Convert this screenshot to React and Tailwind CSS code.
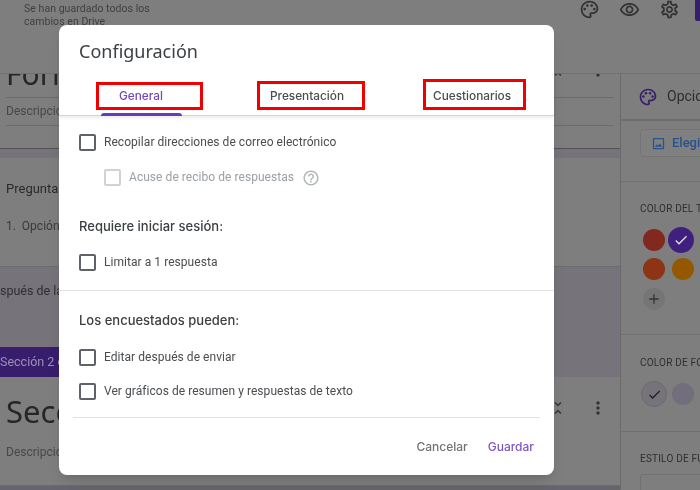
import { MdOutlinePalette, MdOutlineRemoveRedEye, MdOutlineSettings, MdCheck, MdOutlineImage, MdAdd, MdMoreVert, MdUnfoldLess, MdHelpOutline } from 'react-icons/md'

const Checkbox = ({ label, disabled = false, className = '' }) => (
  <div className={`flex items-center ${className}`}>
    <div className={`w-[17px] h-[17px] shrink-0 rounded-[2px] border-2 ${disabled ? 'border-[#d0d2d5]' : 'border-[#5f6368]'}`} />
    <span className={`ml-[8px] text-[12px] tracking-[0.05px] leading-none ${disabled ? 'text-[#9aa0a6]' : 'text-[#4a4d50]'}`}>{label}</span>
  </div>
)

const SettingsDialog = () => (
  <div className="absolute left-[59px] top-[25px] w-[495px] h-[450px] bg-white rounded-[8px] shadow-lg flex flex-col font-['Roboto',sans-serif]">
    <h2 className="pl-[20px] pt-[14px] h-[52px] text-[18px] leading-[24px] text-[#3c4043] font-['Noto_Sans',sans-serif]">Configuración</h2>

    <div className="relative h-[39px] shrink-0 flex items-start pl-[37px] border-b border-[#d5d5d5] shadow-[0_2px_3px_rgba(0,0,0,0.08)] font-['Inter',sans-serif] text-[11.8px] leading-[16px] font-medium">
      <div className="w-[107px] h-[28px] mt-[5px] pl-[20px] pb-[3px] border-[3px] border-[#f00000] flex items-end text-[#7248b9]">General</div>
      <div className="w-[108px] h-[29px] mt-[4px] ml-[54px] pl-[10px] pb-[3px] border-[3px] border-[#f00000] flex items-end text-[#4a4d50]">Presentación</div>
      <div className="w-[103px] h-[31px] mt-[2px] ml-[58px] pl-[7px] pb-[3px] border-[3px] border-[#f00000] flex items-end text-[#4a4d50]">Cuestionarios</div>
      <div className="absolute left-[42px] bottom-[-1px] w-[81px] h-[3px] rounded-t-[3px] bg-[#673ab7]" />
    </div>

    <div className="px-[20px] pt-[18px]">
      <Checkbox label="Recopilar direcciones de correo electrónico" className="h-[16px]" />
      <Checkbox label="Acuse de recibo de respuestas" disabled className="h-[16px] mt-[19px] ml-[25px]" />
      <div className="absolute left-[243px] top-[144px] text-[#b4b7ba]"><MdHelpOutline size={18} /></div>
      <h3 className="mt-[32px] h-[18px] text-[13px] leading-[18px] text-[#3c4043] font-medium font-['Inter',sans-serif]">Requiere iniciar sesión:</h3>
      <Checkbox label="Limitar a 1 respuesta" className="h-[16px] mt-[19px]" />
    </div>

    <div className="h-px bg-[#e2e2e2] mt-[20px]" />

    <div className="px-[20px] pt-[20px]">
      <h3 className="h-[18px] text-[13px] leading-[18px] text-[#3c4043] font-medium font-['Inter',sans-serif]">Los encuestados pueden:</h3>
      <Checkbox label="Editar después de enviar" className="h-[16px] mt-[20px]" />
      <Checkbox label="Ver gráficos de resumen y respuestas de texto" className="h-[16px] mt-[18px]" />
    </div>

    <div className="h-px bg-[#e2e2e2] mx-[14px] mt-[18px]" />

    <div className="flex justify-end pr-[20px] pt-[21px] text-[12px] leading-[16px] font-medium font-['Inter',sans-serif]">
      <button className="text-[#6f7276]">Cancelar</button>
      <button className="ml-[20px] text-[#7e57c2]">Guardar</button>
    </div>
  </div>
)

const Swatch = ({ color, check = false, size = 'w-[22px] h-[22px]' }) => (
  <div className={`${size} rounded-full flex items-center justify-center ${color}`}>
    {check && <MdCheck size={16} className="text-[#dcdcdc]" />}
  </div>
)

const App = () => (
  <div className="relative w-[700px] h-[490px] overflow-hidden bg-[#7e7e7e] font-['Roboto',sans-serif] blur-[0.4px]">
    <header className="h-[73px] flex items-start">
      <p className="ml-[24px] mt-[2px] text-[10.5px] leading-[13px] tracking-[0.05px] text-[#3f3f3f]">Se han guardado todos los<br />cambios en Drive</p>
      <div className="ml-auto flex items-center gap-[19px] mt-[-3px] text-[#333333]">
        <MdOutlinePalette size={21} />
        <MdOutlineRemoveRedEye size={21} />
        <MdOutlineSettings size={21} />
        <div className="w-[5px] h-[24px] ml-[-4px] bg-[#381d6c] rounded-l-[2px]" />
      </div>
    </header>

    <div className="flex h-[417px] border-t border-[#707070]">
      <main className="w-[620px] flex flex-col shrink-0">
        <section className="relative h-[74px] px-[6px] flex flex-col overflow-hidden">
          <div className="h-[24px] border-b border-[#6b6b6b] overflow-hidden">
            <p className="mt-[-18px] text-[30px] leading-[36px] text-[#262626] font-['Noto_Sans',sans-serif]">Form</p>
          </div>
          <div className="h-[28px] border-b border-[#6b6b6b] text-[12px] leading-[27px] text-[#484848]">Descripción</div>
          <div className="absolute right-[12px] top-[-14px] flex items-center gap-[21px] text-[#333333]">
            <MdUnfoldLess size={18} />
            <MdMoreVert size={20} />
          </div>
        </section>
        <div className="h-[10px] bg-[#76737b] border-t border-[#525252] shrink-0" />
        <section className="h-[109px] px-[6px] pt-[22px] border-b border-[#6c6c6c] shrink-0">
          <p className="text-[13px] leading-[18px] text-[#2a2a2a]">Pregunta</p>
          <p className="mt-[19px] text-[12px] leading-[18px] text-[#3a3a3a]">1.&nbsp;&nbsp;Opción</p>
        </section>
        <section className="h-[110px] bg-[#76737b] flex flex-col shrink-0">
          <p className="h-[80px] pt-[15px] text-[12.5px] leading-[18px] text-[#2e2e2e]">spués de la</p>
          <div className="h-[30px] w-[200px] bg-[#381d6c] text-[12.5px] leading-[30px] text-[#9c90b5]">Sección 2 de 2</div>
        </section>
        <section className="relative h-[108px] px-[6px] pt-[14px] shrink-0">
          <p className="text-[31px] leading-[40px] text-[#262626] font-['Noto_Sans',sans-serif]">Secc</p>
          <p className="mt-[12px] text-[12px] leading-[18px] text-[#484848]">Descripción</p>
          <div className="absolute right-[12px] top-[21px] flex items-center gap-[21px] text-[#333333]">
            <MdUnfoldLess size={18} />
            <MdMoreVert size={20} />
          </div>
        </section>
        <div className="flex-1 bg-[#66646c] border-t border-[#6c6c6c]" />
      </main>

      <aside className="flex-1 border-l border-[#6b6b6b] text-[#2e2e2e]">
        <div className="h-[47px] pl-[17px] flex items-center border-b-2 border-[#6d6d6d]">
          <MdOutlinePalette size={20} className="text-[#381d6c]" />
          <span className="ml-[9px] text-[14px] whitespace-nowrap">Opciones</span>
        </div>
        <div className="h-[61px] pl-[19px] pt-[8px] border-b border-[#707070]">
          <div className="h-[28px] w-[100px] pl-[10px] flex items-center rounded-l-[4px] border border-[#747474] bg-[#808080] text-[#27518f]">
            <MdOutlineImage size={15} />
            <span className="ml-[6px] text-[13px] font-medium whitespace-nowrap">Elegir</span>
          </div>
        </div>
        <div className="h-[153px] pl-[19px] pt-[20px] border-b border-[#707070]">
          <p className="text-[10px] leading-[14px] tracking-[0.2px] whitespace-nowrap">COLOR DEL TEMA</p>
          <div className="flex items-center gap-[3px] mt-[11px] ml-[3px] w-[120px]">
            <Swatch color="bg-[#82291f]" />
            <Swatch color="bg-[#40207f]" check size="w-[26px] h-[26px]" />
          </div>
          <div className="flex items-center gap-[7px] mt-[5px] ml-[3px] w-[120px]">
            <Swatch color="bg-[#8c3414]" />
            <Swatch color="bg-[#945800]" />
          </div>
          <div className="w-[22px] h-[22px] mt-[8px] ml-[3px] rounded-full bg-[#757575] flex items-center justify-center">
            <MdAdd size={16} className="text-[#333333]" />
          </div>
        </div>
        <div className="h-[97px] pl-[19px] pt-[21px] border-b border-[#707070]">
          <p className="text-[10px] leading-[14px] tracking-[0.2px] whitespace-nowrap">COLOR DE FONDO</p>
          <div className="flex items-center gap-[5px] mt-[11px] ml-[1px] w-[120px]">
            <div className="w-[26px] h-[26px] rounded-full border border-[#6a6a70] bg-[#76737b] flex items-center justify-center">
              <MdCheck size={15} className="text-[#222222]" />
            </div>
            <Swatch color="bg-[#726e7b]" />
          </div>
        </div>
        <div className="pl-[19px] pt-[20px]">
          <p className="text-[10px] leading-[14px] tracking-[0.2px] whitespace-nowrap">ESTILO DE FUENTE</p>
          <div className="h-[30px] mt-[8px] rounded-l-[4px] border border-[#707070]" />
        </div>
      </aside>
    </div>

    <SettingsDialog />
  </div>
)

export default App
